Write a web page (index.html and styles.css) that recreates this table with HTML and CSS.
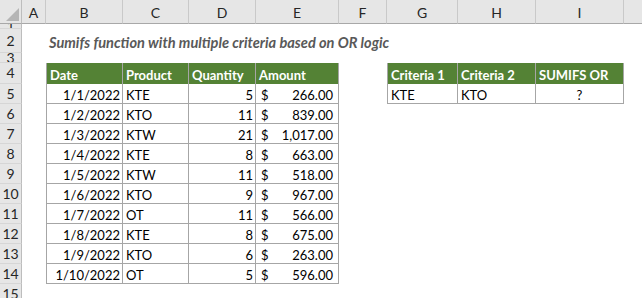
FILE: index.html
```html
<!DOCTYPE html>
<html>
<head>
<meta charset="utf-8">
<link rel="stylesheet" href="styles.css">
</head>
<body>
<div class="sheet">
  <div class="corner"><svg width="22" height="24" viewBox="0 0 22 24"><polygon points="19,8 19,21 6,21" fill="#b5b5b5"/></svg></div>
  <div class="ch">A</div><div class="ch">B</div><div class="ch">C</div><div class="ch">D</div><div class="ch">E</div><div class="ch">F</div><div class="ch">G</div><div class="ch">H</div><div class="ch">I</div><div class="ch last"></div>

  <div class="rh">1</div>
  <div class="rh">2</div><div class="title">Sumifs function with multiple criteria based on OR logic</div>
  <div class="rh">3</div>

  <div class="rh">4</div>
  <div class="h b first">Date</div><div class="h c">Product</div><div class="h d">Quantity</div><div class="h e">Amount</div>
  <div class="h g first">Criteria 1</div><div class="h hh">Criteria 2</div><div class="h i">SUMIFS OR</div>

  <div class="rh">5</div>
  <div class="t b first num">1/1/2022</div><div class="t c">KTE</div><div class="t d num">5</div><div class="t e acc"><span>$</span><span>266.00</span></div>
  <div class="t g first">KTE</div><div class="t hh">KTO</div><div class="t i ctr">?</div>

  <div class="rh">6</div>
  <div class="t b first num">1/2/2022</div><div class="t c">KTO</div><div class="t d num">11</div><div class="t e acc"><span>$</span><span>839.00</span></div>

  <div class="rh">7</div>
  <div class="t b first num">1/3/2022</div><div class="t c">KTW</div><div class="t d num">21</div><div class="t e acc"><span>$</span><span>1,017.00</span></div>

  <div class="rh">8</div>
  <div class="t b first num">1/4/2022</div><div class="t c">KTE</div><div class="t d num">8</div><div class="t e acc"><span>$</span><span>663.00</span></div>

  <div class="rh">9</div>
  <div class="t b first num">1/5/2022</div><div class="t c">KTW</div><div class="t d num">11</div><div class="t e acc"><span>$</span><span>518.00</span></div>

  <div class="rh">10</div>
  <div class="t b first num">1/6/2022</div><div class="t c">KTO</div><div class="t d num">9</div><div class="t e acc"><span>$</span><span>967.00</span></div>

  <div class="rh">11</div>
  <div class="t b first num">1/7/2022</div><div class="t c">OT</div><div class="t d num">11</div><div class="t e acc"><span>$</span><span>566.00</span></div>

  <div class="rh">12</div>
  <div class="t b first num">1/8/2022</div><div class="t c">KTE</div><div class="t d num">8</div><div class="t e acc"><span>$</span><span>675.00</span></div>

  <div class="rh">13</div>
  <div class="t b first num">1/9/2022</div><div class="t c">KTO</div><div class="t d num">6</div><div class="t e acc"><span>$</span><span>263.00</span></div>

  <div class="rh">14</div>
  <div class="t b first num">1/10/2022</div><div class="t c">OT</div><div class="t d num">5</div><div class="t e acc"><span>$</span><span>596.00</span></div>

  <div class="rh">15</div>
</div>
</body>
</html>
```

FILE: styles.css
```css
html, body {
  margin: 0;
  padding: 0;
  background: #ffffff;
  overflow: hidden;
}

.sheet {
  display: grid;
  grid-template-columns: 22px 24px 77px 66px 67px 83px 48px 71px 78px 88px 18px;
  grid-template-rows: 24px 5px 24px 10px 21px repeat(11, 20px);
  width: 642px;
  height: 298px;
  overflow: hidden;
  font-family: "Lato", "Noto Sans", sans-serif;
  font-size: 13px;
  color: #000000;
}

.sheet > div {
  box-sizing: border-box;
  white-space: nowrap;
  overflow: hidden;
}

.corner {
  grid-column: 1;
  background: #e6e6e6;
  border-right: 1px solid #bdbdbd;
  border-bottom: 1px solid #a8a8a8;
}

.corner svg {
  display: block;
}

.ch {
  background: #e6e6e6;
  border-right: 1px solid #c9c9c9;
  border-bottom: 1px solid #a8a8a8;
  display: flex;
  align-items: center;
  justify-content: center;
  font-size: 14px;
  color: #262626;
  padding-top: 1px;
}

.ch.last {
  border-right: none;
}

.rh {
  grid-column: 1;
  background: #e6e6e6;
  border-right: 1px solid #bdbdbd;
  border-bottom: 1px solid #d6d6d6;
  display: flex;
  align-items: center;
  justify-content: center;
  font-size: 14px;
  color: #262626;
  line-height: 16px;
}

.title {
  grid-column: 3 / span 9;
  font-weight: bold;
  font-style: italic;
  color: #595959;
  font-size: 14.6px;
  display: flex;
  align-items: center;
  padding: 3px 0 0 3px;
}

.b { grid-column: 3; }
.c { grid-column: 4; }
.d { grid-column: 5; }
.e { grid-column: 6; }
.g { grid-column: 8; }
.hh { grid-column: 9; }
.i { grid-column: 10; }

.h {
  background: #548235;
  color: #ffffff;
  font-weight: bold;
  border-right: 1px solid #a6a6a6;
  display: flex;
  align-items: center;
  padding: 3px 0 0 3px;
}

.h.first,
.t.first {
  border-left: 1px solid #a6a6a6;
}

.t {
  border-right: 1px solid #a6a6a6;
  border-bottom: 1px solid #a6a6a6;
  display: flex;
  align-items: center;
  padding: 2px 3px 0 3px;
}

.t.num {
  justify-content: flex-end;
  padding-right: 2px;
}

.t.ctr {
  justify-content: center;
}

.t.acc {
  justify-content: space-between;
  padding: 2px 5px 0 5px;
}
```
